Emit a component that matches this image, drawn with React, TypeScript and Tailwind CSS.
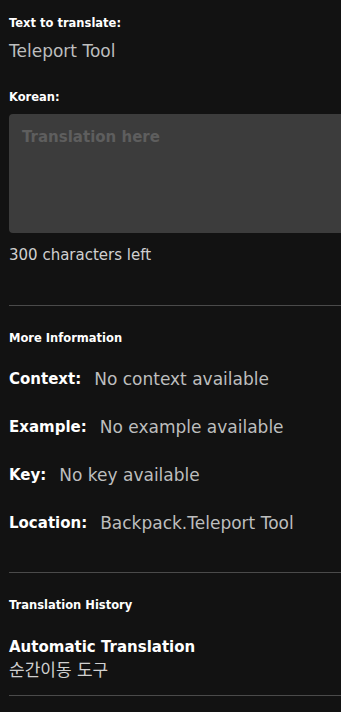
import React from "react";

const font = { fontFamily: '"DejaVu Sans", "Noto Sans CJK KR", sans-serif' };

function Row({ label, value }: { label: string; value: string }) {
  return (
    <div className="flex items-center h-[48px] leading-[20px]">
      <span className="font-bold text-white text-[15px]">{label}</span>
      <span className="ml-[13px] text-[17px] text-[#bdbebe]">{value}</span>
    </div>
  );
}

export default function App() {
  return (
    <div
      className="w-[341px] h-[712px] overflow-hidden bg-[#121212] pl-[9px]"
      style={font}
    >
      <div className="pt-[15px] text-[11.5px] leading-[16px] font-bold text-white">
        Text to translate:
      </div>
      <div className="mt-[10px] text-[17px] leading-[20px] text-[#bdbebe]">
        Teleport Tool
      </div>
      <div className="mt-[28px] text-[11.5px] leading-[16px] font-bold text-white">
        Korean:
      </div>
      <div className="mt-[9px] h-[119px] w-[360px] rounded-[4px] bg-[#3c3c3c] pl-[13px] pt-[11px]">
        <span className="text-[15px] leading-[20px] font-bold text-[#5e5e5e]">
          Translation here
        </span>
      </div>
      <div className="mt-[12px] text-[15px] leading-[20px] text-[#d0d0d0]">
        300 characters left
      </div>
      <div className="mt-[40px] h-px bg-[#4a4a4a]" />
      <div className="mt-[24px] text-[11.5px] leading-[16px] font-bold text-white">
        More Information
      </div>
      <div className="mt-[9px]">
        <Row label="Context:" value="No context available" />
        <Row label="Example:" value="No example available" />
        <Row label="Key:" value="No key available" />
        <Row label="Location:" value="Backpack.Teleport Tool" />
      </div>
      <div className="mt-[25px] h-px bg-[#4a4a4a]" />
      <div className="mt-[24px] text-[11.5px] leading-[16px] font-bold text-white">
        Translation History
      </div>
      <div className="mt-[24px] text-[15px] leading-[20px] font-bold text-white">
        Automatic Translation
      </div>
      <div className="mt-[3px] text-[17px] leading-[20px] text-[#d0d0d0]">
        순간이동 도구
      </div>
      <div className="mt-[15px] h-px bg-[#4a4a4a]" />
    </div>
  );
}
